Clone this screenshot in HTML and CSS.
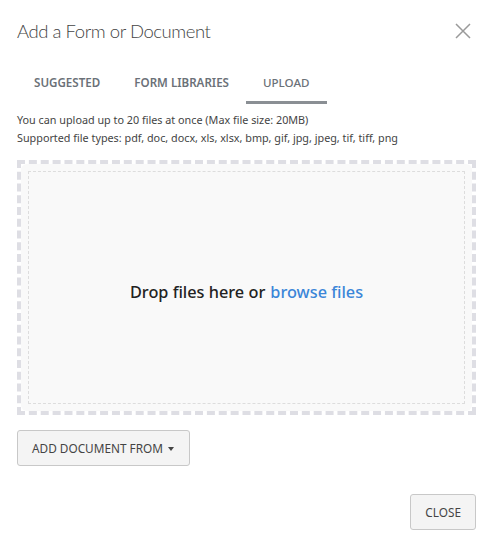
FILE: index.html
```html
<!DOCTYPE html>
<html lang="en">
<head>
    <meta charset="UTF-8">
    <meta name="viewport" content="width=device-width, initial-scale=1.0">
    <title>Add a Form or Document</title>
    <link rel="stylesheet" href="styles.css">
</head>
<body>

    <div class="modal">
        <div class="modal-header">
            <h2>Add a Form or Document</h2>
            <button class="close-x" aria-label="Close">
                <svg width="16" height="16" viewBox="0 0 16 16">
                    <path d="M1 1 L15 15 M15 1 L1 15" stroke="#9a9a9a" stroke-width="1.5" fill="none"/>
                </svg>
            </button>
        </div>

        <div class="tabs">
            <a class="tab">SUGGESTED</a>
            <a class="tab">FORM LIBRARIES</a>
            <a class="tab active">UPLOAD</a>
        </div>

        <div class="upload-info">
            <p>You can upload up to 20 files at once (Max file size: 20MB)</p>
            <p>Supported file types: pdf, doc, docx, xls, xlsx, bmp, gif, jpg, jpeg, tif, tiff, png</p>
        </div>

        <div class="dropzone">
            <div class="dropzone-inner">
                <div class="dropzone-target">
                    Drop files here or <a class="browse">browse files</a>
                </div>
            </div>
        </div>

        <button class="btn btn-dropdown">ADD DOCUMENT FROM <span class="caret"></span></button>

        <div class="modal-footer">
            <button class="btn">CLOSE</button>
        </div>
    </div>

</body>
</html>
```

FILE: styles.css
```css
body {
    margin: 0;
    padding: 0;
    background-color: #fff;
    font-family: "Noto Sans", "Open Sans", sans-serif;
    color: #444;
}
.modal {
    padding: 0 18px 0 17px;
}
.modal-header {
    display: flex;
    justify-content: space-between;
    align-items: center;
    height: 62px;
}
.modal-header h2 {
    margin: 0;
    font-family: "Lato", "Noto Sans", sans-serif;
    font-weight: 300;
    font-size: 18.5px;
    letter-spacing: -0.45px;
    color: #444;
}
.close-x {
    background: none;
    border: none;
    padding: 0;
    margin-right: 5px;
    cursor: pointer;
    display: flex;
}
.tabs {
    display: flex;
    height: 42px;
}
.tab {
    padding: 0 17px;
    font-size: 11.6px;
    font-weight: 600;
    color: #6b7178;
    line-height: 41px;
    border-bottom: 3px solid transparent;
}
.tab.active {
    font-weight: 500;
    color: #6b7178;
    border-bottom-color: #8a8f94;
}
.upload-info {
    padding-top: 7px;
    font-size: 10.8px;
    color: #444;
}
.upload-info p {
    margin: 0;
    line-height: 18px;
}
.dropzone {
    margin-top: 13px;
    border: 4px dashed #dedee4;
    height: 247px;
}
.dropzone-inner {
    height: 100%;
    box-sizing: border-box;
    padding: 7px;
    background-color: #f9f9f9;
    border-radius: 6px;
}
.dropzone-target {
    height: 100%;
    box-sizing: border-box;
    padding-top: 8px;
    border: 1px dashed #ddd;
    display: flex;
    align-items: center;
    justify-content: center;
    font-size: 16.3px;
    font-weight: 500;
    color: #222;
}
.browse {
    color: #3b86d8;
    margin-left: 5px;
}
.btn {
    font-family: inherit;
    font-size: 11.8px;
    color: #444;
    background-color: #f4f4f4;
    border: 1px solid #c8c8c8;
    border-radius: 3px;
    padding: 0 14px;
    height: 36px;
    cursor: pointer;
}
.btn-dropdown {
    margin-top: 15px;
    padding-right: 15px;
}
.caret {
    display: inline-block;
    width: 0;
    height: 0;
    margin-left: 2px;
    vertical-align: 2px;
    border-left: 3.5px solid transparent;
    border-right: 3.5px solid transparent;
    border-top: 4px solid #444;
}
.modal-footer {
    display: flex;
    justify-content: flex-end;
    margin-top: 28px;
}
```
